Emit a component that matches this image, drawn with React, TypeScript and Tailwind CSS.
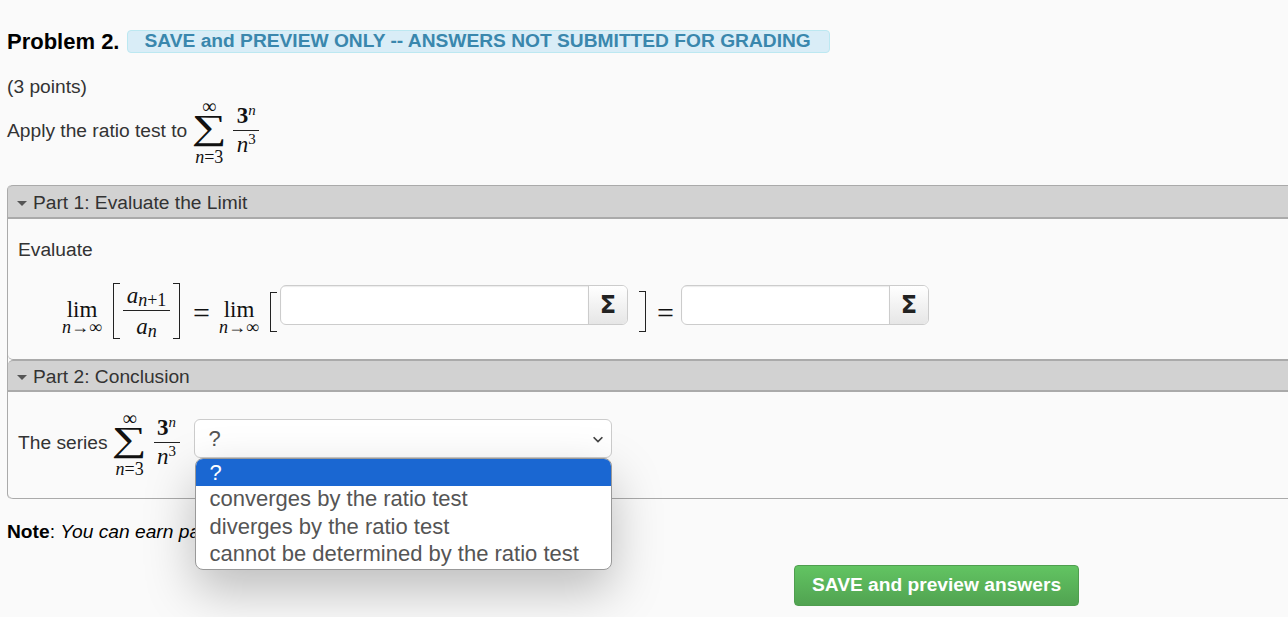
const serif = "font-['Liberation_Serif',serif]";

const Series = () => (
	<div className={`flex items-center h-[68px] gap-[5px] ${serif} text-[#111]`}>
		<div className="flex flex-col items-center w-[38px] mt-[4px]">
			<span className="text-[20px] leading-[11px] h-[12px]">∞</span>
			<span className="text-[35px] leading-[30px] h-[35px] scale-x-[1.4]">∑</span>
			<span className="text-[18px] leading-[15px] h-[15px] mt-[2px]"><i>n</i>=3</span>
		</div>
		<div className="flex flex-col items-center w-[26px] mt-[2px]">
			<span className="text-[23px] leading-[24px] h-[24px] -mt-[3px] font-bold whitespace-nowrap">3<span className="text-[15px] italic font-normal align-[8px] leading-none">n</span></span>
			<span className="w-full h-px bg-[#222] mt-[3px]"></span>
			<span className="text-[23px] leading-[27px] h-[27px] italic whitespace-nowrap">n<span className="text-[15px] not-italic align-[8px] leading-none">3</span></span>
		</div>
	</div>
);

const Lim = () => (
	<div className="flex flex-col items-center w-[44px] mt-[17px] self-start">
		<span className="text-[23px] leading-[20px]">lim</span>
		<span className="text-[18px] leading-[14px] whitespace-nowrap"><i>n</i>→∞</span>
	</div>
);

const Bracket = ({ side, h }: { side: "l" | "r"; h: string }) => (
	<div className={`w-[7px] shrink-0 ${h} border-y border-[#222] ${side === "l" ? "border-l" : "border-r"}`}></div>
);

const AnswerBox = ({ width, className }: { width: string; className: string }) => (
	<div className={`flex shrink-0 self-start mt-[2px] h-[40px] ${width} ${className} rounded-[6px] border border-[#ccc] bg-white overflow-hidden`}>
		<div className="flex-1 shadow-[inset_0_1px_1px_rgba(0,0,0,0.08)]"></div>
		<div className="w-[39px] border-l border-[#ccc] bg-gradient-to-b from-[#ffffff] to-[#e6e6e6] flex items-center justify-center font-['DejaVu_Sans',sans-serif] text-[24px] font-bold text-[#222]">
			Σ
		</div>
	</div>
);

const PartHeader = ({ label, h }: { label: string; h: string }) => (
	<div className={`flex items-center ${h} bg-[#d2d2d2] border-t border-b-2 border-t-[#aaaaaa] border-b-[#aaaaaa] rounded-tl-[5px] pl-[9px] pt-[3px] gap-[6px] text-[19.2px] text-[#333]`}>
		<span className="w-0 h-0 border-x-[5px] border-x-transparent border-t-[5px] border-t-[#555]"></span>
		{label}
	</div>
);

const DropdownMenu = () => (
	<div className="absolute left-0 top-[38px] w-[417px] h-[112px] bg-white border border-[#999] rounded-[8px] overflow-hidden shadow-[0_20px_50px_rgba(0,0,0,0.25)] text-[22px] leading-[27.4px] text-[#555]">
		<div className="bg-[#1a67d2] text-white px-[14px] h-[27px]">?</div>
		<div className="px-[14px] whitespace-nowrap -mt-[0.6px]">converges by the ratio test</div>
		<div className="px-[14px] whitespace-nowrap">diverges by the ratio test</div>
		<div className="px-[14px] whitespace-nowrap">cannot be determined by the ratio test</div>
	</div>
);

export default function App() {
	return (
		<div className="w-[1288px] h-[617px] overflow-hidden bg-[#fafafa] font-['Liberation_Sans',sans-serif] text-[19.2px] text-[#333] pl-[7px] pt-[30px]">
			<div className="flex items-center h-[23px] gap-[8px]">
				<span className="text-[22px] font-bold text-black whitespace-nowrap">Problem 2.</span>
				<div className="w-[703px] h-[23px] rounded-[4px] bg-[#d9edf7] border border-[#bce8f1] pl-[16px] flex items-center font-bold text-[#3a87ad] whitespace-nowrap">
					SAVE and PREVIEW ONLY -- ANSWERS NOT SUBMITTED FOR GRADING
				</div>
			</div>
			<p className="mt-[24px] h-[20px] leading-[20px]">(3 points)</p>
			<div className="flex items-center h-[68px] gap-[3px]">
				<span>Apply the ratio test to</span>
				<Series />
			</div>

			<div className="mt-[20px] w-[1300px] border-l border-[#aaa] rounded-l-[5px]">
				<PartHeader label="Part 1: Evaluate the Limit" h="h-[34px]" />
				<div className="h-[141px] pl-[10px] pt-[19px] border-b border-[#aaa] rounded-bl-[5px]">
					<p className="leading-[24px]">Evaluate</p>
					<div className={`flex items-start mt-[21px] ml-[42px] h-[56px] ${serif} text-[#111]`}>
						<Lim />
						<div className="flex items-start ml-[9px] gap-[3px]">
							<Bracket side="l" h="h-[56px]" />
							<div className="flex flex-col items-center w-[47px]">
								<span className="text-[23px] leading-[26px] h-[27px] italic whitespace-nowrap">a<span className="text-[18px] align-[-3px] leading-none">n</span><span className="text-[18px] not-italic align-[-3px] leading-none">+1</span></span>
								<span className="w-full h-px bg-[#222]"></span>
								<span className="text-[23px] leading-[32px] italic">a<span className="text-[18px] align-[-3px] leading-none">n</span></span>
							</div>
							<Bracket side="r" h="h-[56px]" />
						</div>
						<span className="text-[30px] leading-[30px] mt-[15px] ml-[13px] w-[17px]">=</span>
						<div className="ml-[7px] flex"><Lim /></div>
						<div className="ml-[9px] mt-[9px]"><Bracket side="l" h="h-[40px]" /></div>
						<AnswerBox width="w-[348px]" className="ml-[3px]" />
						<div className="ml-[11px] mt-[8px]"><Bracket side="r" h="h-[41px]" /></div>
						<span className="text-[30px] leading-[30px] mt-[15px] ml-[11px] w-[17px]">=</span>
						<AnswerBox width="w-[248px]" className="ml-[7px]" />
					</div>
				</div>
				<PartHeader label="Part 2: Conclusion" h="h-[32px]" />
				<div className="h-[107px] pl-[10px] pt-[17px] border-b border-[#aaa] rounded-bl-[5px]">
					<div className="flex items-center h-[68px] gap-[3px]">
						<span className="whitespace-nowrap">The series</span>
						<Series />
						<div className="relative ml-[11px] self-start mt-[10px] w-[418px] h-[39px] rounded-[6px] border border-[#ccc] bg-white flex items-center justify-between pl-[14px] pr-[6px] text-[22px] text-[#555]">
							?
							<svg width="14" height="14" viewBox="0 0 16 16" fill="none" stroke="#444" strokeWidth="2"><path d="M3 6l5 5 5-5" /></svg>
							<DropdownMenu />
						</div>
					</div>
				</div>
			</div>

			<p className="mt-[21px] leading-[24px] text-black">
				<b>Note</b>: <i>You can earn partial credit on this problem.</i>
			</p>
			<div className="mt-[21px] ml-[787px] w-[285px] h-[41px] rounded-[4px] border border-[#4f9e4f] bg-gradient-to-b from-[#62c462] to-[#51a351] flex items-center justify-center font-bold text-white">
				SAVE and preview answers
			</div>
		</div>
	);
}
